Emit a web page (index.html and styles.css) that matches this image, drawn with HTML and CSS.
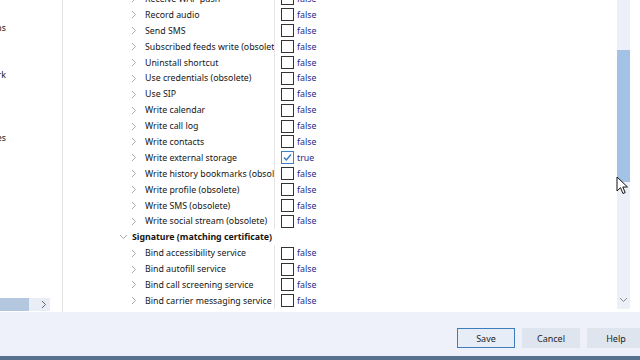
FILE: index.html
```html
<!DOCTYPE html>
<html lang="en">
  <head>
    <meta charset="UTF-8" />
    <title>Permissions</title>
    <link rel="stylesheet" href="styles.css">
  </head>
  <body>
    <div class="dialog">
      <div class="content">
        <div class="side">
          <div class="side__tree">
            <div class="side__item side__item--first">Permissions</div>
            <div class="side__item side__item--second">Network</div>
            <div class="side__item side__item--third">Capabilities</div>
          </div>
          <div class="hscroll">
            <div class="hscroll__thumb"></div>
            <svg class="hscroll__arrow" width="6" height="9" viewBox="0 0 6 9">
              <path d="M1 1 L4.5 4.5 L1 8" fill="none" stroke="#666" stroke-width="1" />
            </svg>
          </div>
        </div>

        <div class="main">
          <div class="list" id="list"></div>
        </div>

        <div class="vscroll">
          <div class="vscroll__thumb"></div>
          <svg class="vscroll__arrow" width="9" height="6" viewBox="0 0 9 6">
            <path d="M1 1 L4.5 4.5 L8 1" fill="none" stroke="#8a8a8a" stroke-width="1" />
          </svg>
        </div>
      </div>

      <div class="footer">
        <button class="btn btn--primary">Save</button>
        <button class="btn">Cancel</button>
        <button class="btn">Help</button>
      </div>
      <div class="taskbar"></div>
    </div>

    <svg class="cursor" width="13" height="20" viewBox="0 0 13 20">
      <path d="M1 1 L1 15 L4.5 11.7 L7 17.5 L9.2 16.6 L6.8 11 L11.5 11 Z" fill="#fff" stroke="#111" stroke-width="1" stroke-linejoin="round" />
    </svg>

    <script>
      // строки списка разрешений
      const rows = [
        ["Receive WAP push", false],
        ["Record audio", false],
        ["Send SMS", false],
        ["Subscribed feeds write (obsolete)", false],
        ["Uninstall shortcut", false],
        ["Use credentials (obsolete)", false],
        ["Use SIP", false],
        ["Write calendar", false],
        ["Write call log", false],
        ["Write contacts", false],
        ["Write external storage", true],
        ["Write history bookmarks (obsolete)", false],
        ["Write profile (obsolete)", false],
        ["Write SMS (obsolete)", false],
        ["Write social stream (obsolete)", false],
        ["Signature (matching certificate)", null],
        ["Bind accessibility service", false],
        ["Bind autofill service", false],
        ["Bind call screening service", false],
        ["Bind carrier messaging service", false],
      ];

      const chevronRight =
        '<svg width="6" height="9" viewBox="0 0 6 9"><path d="M1 1 L4.5 4.5 L1 8" fill="none" stroke="#a8a8a8" stroke-width="1"/></svg>';
      const chevronDown =
        '<svg width="9" height="6" viewBox="0 0 9 6"><path d="M1 1 L4.5 4.5 L8 1" fill="none" stroke="#a8a8a8" stroke-width="1"/></svg>';
      const check =
        '<svg width="11" height="11" viewBox="0 0 11 11"><path d="M2 5.5 L4.3 8 L9 2.5" fill="none" stroke="#2f78c4" stroke-width="1.3"/></svg>';

      const list = document.getElementById("list");
      rows.forEach(([name, value]) => {
        const row = document.createElement("div");
        if (value === null) {
          row.className = "row row--group";
          row.innerHTML = `<span class="row__toggle">${chevronDown}</span><span class="row__group">${name}</span>`;
        } else {
          row.className = "row";
          row.innerHTML =
            `<div class="row__name"><span class="row__toggle">${chevronRight}</span><span class="row__label">${name}</span></div>` +
            `<div class="row__value"><span class="checkbox${value ? " checkbox--on" : ""}">${value ? check : ""}</span><span class="value">${value}</span></div>`;
        }
        list.appendChild(row);
      });
    </script>
  </body>
</html>
```

FILE: styles.css
```css
body {
  margin: 0;
  font-family: "Noto Sans", "Open Sans", sans-serif;
  font-size: 8.8px;
  color: #151515;
  background: #fff;
  overflow: hidden;
}

.dialog {
  width: 640px;
  height: 360px;
  display: flex;
  flex-direction: column;
}

.content {
  height: 312px;
  display: flex;
}

.side {
  width: 62px;
  border-right: 1px solid #e3e3e3;
  display: flex;
  flex-direction: column;
  justify-content: space-between;
  overflow: hidden;
}

.side__tree {
  width: 200px;
  margin-left: -194px;
  display: flex;
  flex-direction: column;
  align-items: flex-end;
}

.side__item {
  height: 16px;
  line-height: 16px;
  white-space: nowrap;
}

.side__item--first {
  margin-top: 20px;
}

.side__item--second {
  margin-top: 31px;
}

.side__item--third {
  margin-top: 47px;
}

.hscroll {
  width: 50px;
  height: 13px;
  margin-bottom: 1px;
  background: #e9edf5;
  display: flex;
  align-items: center;
}

.hscroll__thumb {
  width: 29px;
  height: 100%;
  background: #b3c8df;
}

.hscroll__arrow {
  margin-left: 12px;
}

.main {
  flex: 1;
  overflow: hidden;
}

.list {
  margin-top: -9px;
  padding-left: 52px;
}

.row {
  height: 15.9px;
  display: flex;
  align-items: center;
}

.row__name {
  width: 159px;
  height: 100%;
  display: flex;
  align-items: center;
  border-right: 1px solid #e6e6e6;
  overflow: hidden;
  white-space: nowrap;
}

.row__toggle {
  width: 14px;
  flex: none;
  display: flex;
  align-items: center;
  padding-left: 16px;
}

.row__label {
  flex: none;
}

.row--group .row__toggle {
  width: 9px;
  padding-left: 4px;
  margin-right: 4px;
}

.row__group {
  font-weight: bold;
  white-space: nowrap;
}

.row__value {
  display: flex;
  align-items: center;
  padding-left: 6px;
  gap: 3px;
}

.checkbox {
  width: 11px;
  height: 11px;
  border: 1px solid #333;
  display: flex;
  align-items: center;
  justify-content: center;
  background: #fff;
}

.checkbox--on {
  border-color: #3c7fc2;
}

.value {
  color: #1f2a8a;
}

.vscroll {
  width: 13px;
  margin-right: 10px;
  background: #eef0f7;
  height: 309px;
  display: flex;
  flex-direction: column;
  align-items: center;
}

.vscroll__thumb {
  width: 100%;
  height: 132px;
  margin-top: 50px;
  background: #a3c3e6;
}

.vscroll__arrow {
  margin-top: auto;
  margin-bottom: 6px;
}

.footer {
  flex: 1;
  background: #eef1f9;
  display: flex;
  justify-content: flex-end;
  align-items: flex-start;
  gap: 7px;
  padding-top: 16px;
  margin-right: -5px;
}

.btn {
  width: 58px;
  height: 20px;
  padding: 0;
  font-family: inherit;
  font-size: 9px;
  color: #1e1e1e;
  background: #dfe5ee;
  border: 1px solid #dfe5ee;
}

.btn--primary {
  background: #e7edf6;
  border-color: #3f7cbc;
}

.taskbar {
  height: 4px;
  background: #56708e;
}

.cursor {
  position: absolute;
  left: 616px;
  top: 176px;
}
```
